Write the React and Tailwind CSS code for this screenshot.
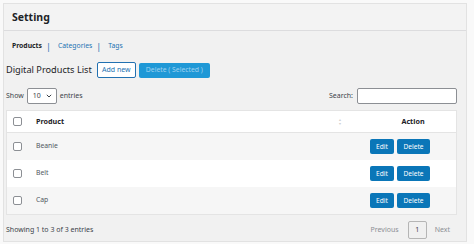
import React from "react";

const font = { fontFamily: '"Noto Sans", "Open Sans", sans-serif' };

function Checkbox() {
  return <span className="block w-[9px] h-[9px] border border-[#8c8f94] rounded-[2px] bg-white" />;
}

function Row({ name, bg }) {
  return (
    <div className={`flex items-center h-[27px] ${bg}`}>
      <div className="w-[29px] pl-[6px] flex items-center"><Checkbox /></div>
      <div className="flex-1 text-[6.8px] text-[#50575e]">{name}</div>
      <div className="w-[86px] flex gap-[3px]">
        <span className="h-[15px] w-[24px] bg-[#0a76b8] text-white text-[6.6px] rounded-[2px] flex items-center justify-center">Edit</span>
        <span className="h-[15px] w-[33px] bg-[#0a76b8] text-white text-[6.6px] rounded-[2px] flex items-center justify-center">Delete</span>
      </div>
    </div>
  );
}

export default function App() {
  return (
    <div className="w-[474px] h-[244px] bg-[#f9f9f9] pt-[3px] pl-[3px] overflow-hidden" style={font}>
      <div className="w-[464px] h-[239px] border border-[#e2e2e2] bg-[#f1f1f1] flex flex-col">
        <div className="h-[27px] border-b border-[#dcdcde] bg-[#f3f3f3] flex items-center pl-[8px]">
          <span className="text-[10.5px] font-bold text-[#1d2327] leading-none">Setting</span>
        </div>
        <div className="pl-[2px] pr-[9px]">
          <div className="flex items-center h-[12px] mt-[9px] pl-[6px] text-[6.8px] text-[#2271b1] leading-none">
            <span className="font-bold text-[#1d2327]">Products</span>
            <span className="ml-[4px] mr-[7px] text-[9px] text-[#2271b1]">|</span>
            <span>Categories</span>
            <span className="ml-[4px] mr-[7px] text-[9px] text-[#2271b1]">|</span>
            <span>Tags</span>
          </div>
          <div className="flex items-center mt-[10px] h-[16px]">
            <span className="text-[9.2px] text-[#1d2327] leading-none">Digital Products List</span>
            <span className="ml-[5px] h-[16px] w-[39px] border border-[#2271b1] bg-white text-[#2271b1] text-[7px] rounded-[2px] flex items-center justify-center">Add new</span>
            <span className="ml-[3px] h-[15px] w-[71px] bg-[#1f98d6] text-[#9fd2f0] text-[6.8px] rounded-[2px] flex items-center justify-center">Delete ( Selected )</span>
          </div>
          <div className="flex items-center mt-[10px] h-[16px] text-[7px] text-[#3c434a]">
            <span>Show</span>
            <span className="ml-[3px] h-[16px] w-[30px] border border-[#8c8f94] bg-white rounded-[2px] flex items-center justify-between pl-[5px] pr-[4px] text-[7px]">
              10
              <svg width="6" height="4" viewBox="0 0 6 4"><path d="M0.8 0.8l2.2 2.2L5.2 0.8" stroke="#3c434a" strokeWidth="1" fill="none" /></svg>
            </span>
            <span className="ml-[3px]">entries</span>
            <span className="ml-auto">Search:</span>
            <span className="ml-[4px] h-[16px] w-[100px] border border-[#8c8f94] bg-white rounded-[2px]" />
          </div>
          <div className="mt-[6px] border border-[#e4e4e4]">
            <div className="flex items-center h-[22px] bg-white border-b border-[#e4e4e4]">
              <div className="w-[29px] pl-[6px] flex items-center"><Checkbox /></div>
              <div className="flex-1 text-[7.2px] font-bold text-[#1d2327]">Product</div>
              <div className="w-[6px] mr-[27px] leading-none flex flex-col items-center text-[#d0d0d0]">
                <span className="text-[3.5px]">▲</span>
                <span className="text-[3.5px]">▼</span>
              </div>
              <div className="w-[86px] text-[7.2px] font-bold text-[#1d2327] text-center">Action</div>
            </div>
            <Row name="Beanie" bg="bg-[#f6f6f6]" />
            <Row name="Belt" bg="bg-white" />
            <Row name="Cap" bg="bg-[#f6f6f6]" />
          </div>
          <div className="flex items-center mt-[6px] h-[18px] text-[7px] text-[#3c434a]">
            <span>Showing 1 to 3 of 3 entries</span>
            <span className="ml-auto text-[#8c8f94]">Previous</span>
            <span className="ml-[9px] h-[18px] w-[19px] border border-[#b5b5b5] bg-[#f0f0f0] rounded-[2px] flex items-center justify-center text-[#3c434a]">1</span>
            <span className="ml-[8px] mr-[7px] text-[#8c8f94]">Next</span>
          </div>
        </div>
      </div>
    </div>
  );
}
